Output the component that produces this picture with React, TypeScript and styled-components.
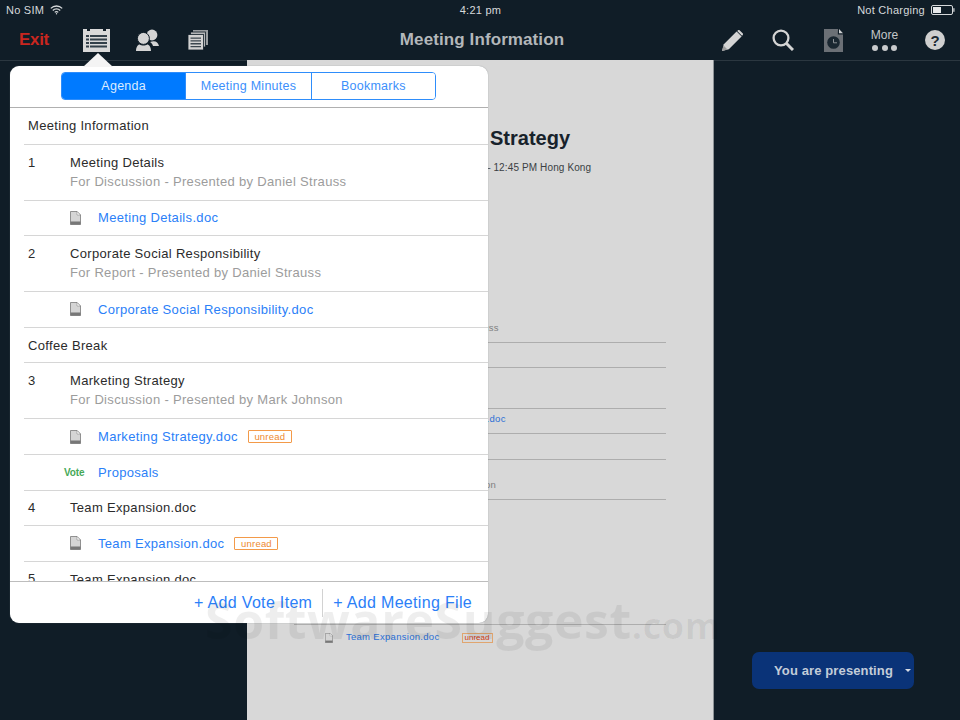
import React from "react";
import styled, { createGlobalStyle } from "styled-components";

const Global = createGlobalStyle`
  html, body { margin: 0; padding: 0; background: #101d27; }
  * { box-sizing: border-box; }
`;
const Root = styled.div`
  position: relative; width: 960px; height: 720px; overflow: hidden;
  background: #101d27; display: flex; flex-direction: column;
  font-family: "Liberation Sans", Arial, sans-serif;
`;
const StatusBar = styled.div`
  height: 20px; padding: 0 5px 0 6px; display: grid; grid-template-columns: 1fr auto 1fr; align-items: center;
  color: #d6d9db; font-size: 11px; letter-spacing: .25px;
`;
const StatusSide = styled.div<{ $end?: boolean }>`
  display: flex; align-items: center; gap: 6px; justify-content: ${p => (p.$end ? "flex-end" : "flex-start")};
`;
const Toolbar = styled.div`
  height: 40px; padding: 0 15px 0 19px; display: grid; grid-template-columns: 1fr auto 1fr; align-items: center;
`;
const ToolGroup = styled.div<{ $end?: boolean }>`
  display: flex; align-items: center; justify-content: ${p => (p.$end ? "flex-end" : "flex-start")};
`;
const Exit = styled.span`
  color: #c9261f; font-size: 17px; font-weight: 700; letter-spacing: -.3px; width: 29px; white-space: nowrap;
`;
const Title = styled.div`
  color: #b3b7ba; font-size: 17px; font-weight: 700; letter-spacing: .1px;
`;
const ToolIcon = styled.span<{ $ml: number }>`
  display: flex; margin-left: ${p => p.$ml}px;
`;
const More = styled.div`
  width: 27px; margin-left: 28px; display: flex; flex-direction: column; align-items: center; gap: 3px;
  color: #c4c6c8; font-size: 12px; line-height: 13px; margin-top: -1px;
`;
const Dots = styled.div`
  display: flex; gap: 3.5px;
`;
const Dot = styled.i`
  width: 6px; height: 6px; border-radius: 50%; background: #c8cacc; display: block;
`;
const HelpBadge = styled.div`
  width: 20px; height: 20px; margin-left: 27px; border-radius: 50%; background: #cfcfcf; color: #1c2831;
  display: flex; align-items: center; justify-content: center; font-size: 15px; font-weight: 700;
`;
const Main = styled.div`
  flex: 1; min-height: 0; border-top: 1px solid #2b3740; padding-left: 247px; display: flex;
`;
const DocPage = styled.div`
  width: 467px; margin-top: -1px; background: #d8d8d8; border-right: 1px solid #8d9296;
`;
const DocClip = styled.div`
  height: 614px; overflow: hidden; padding: 66px 47px 0;
`;
const DocTitle = styled.h1`
  margin: 0; text-align: center; font-size: 20px; line-height: 24px; font-weight: 700; color: #17222b; height: 24px;
`;
const DocDate = styled.div`
  margin-top: 12px; text-align: center; font-size: 10px; line-height: 12px; color: #3a3f44; letter-spacing: .12px;
`;
const DocSpacer = styled.div<{ $h: number }>`
  height: ${p => p.$h}px;
`;
const DocRow = styled.div<{ $h: number; $line?: boolean }>`
  height: ${p => p.$h}px; border-bottom: ${p => (p.$line ? "1px solid #adadad" : "none")};
  display: flex; align-items: flex-end; padding-bottom: 8px; font-size: 9.5px; line-height: 12px; color: #808080;
  white-space: nowrap; letter-spacing: .3px;
`;
const DocLink = styled.span<{ $ml?: number }>`
  color: #2a6fd6; margin-left: ${p => p.$ml ?? 0}px;
`;
const DocBadge = styled.span<{ $ml: number }>`
  margin-left: ${p => p.$ml}px; height: 10px; width: 31px; border: 1px solid #e0a56f; color: #cf3b12;
  font-size: 8px; line-height: 8px; text-align: center; letter-spacing: 0;
`;
const DocFile = styled.span`
  display: flex; margin-left: 31px; margin-right: 13px;
`;
const DocHeading = styled.div`
  margin-top: 24px; font-size: 11.5px; line-height: 14px; font-weight: 700; color: #1a1a1a; letter-spacing: .2px;
`;
const Popover = styled.div`
  position: absolute; left: 10px; top: 66px; width: 478px; height: 557px; background: #fff; border-radius: 9px;
  display: flex; flex-direction: column; box-shadow: 0 0 1px rgba(120,125,130,.9);
`;
const Arrow = styled.div`
  position: absolute; left: 73px; top: -13px; width: 30px; height: 14px; background: #f4f4f4;
  clip-path: polygon(50% 0, 100% 100%, 0 100%);
`;
const TabBar = styled.div`
  height: 42px; flex: none; padding: 6px 0 0 51px; border-bottom: 1px solid #b0b0b0;
`;
const Segment = styled.div`
  width: 375px; height: 28px; display: flex; border: 1px solid #2e8dfb; border-radius: 4px; overflow: hidden;
`;
const Tab = styled.div<{ $active?: boolean; $w: number }>`
  width: ${p => p.$w}px; display: flex; align-items: center; justify-content: center;
  font-size: 12.5px; letter-spacing: .25px;
  color: ${p => (p.$active ? "#dcecff" : "#3c8ffb")};
  background: ${p => (p.$active ? "#007aff" : "#fff")};
  & + & { border-left: 1px solid #2e8dfb; }
`;
const List = styled.div`
  flex: 1; min-height: 0; overflow: hidden; padding-left: 14px;
`;
const Row = styled.div<{ $h: number }>`
  height: ${p => p.$h}px; display: flex; align-items: center; padding-left: 4px;
  border-bottom: 1px solid #d6d6d6; font-size: 13px; letter-spacing: .32px; color: #2b2b2b; white-space: nowrap; flex-shrink: 0;
`;
const RowTop = styled(Row)`
  align-items: flex-start; padding-top: 10px;
`;
const Num = styled.span`
  width: 42px; flex: none; line-height: 16px;
`;
const Stack = styled.div`
  display: flex; flex-direction: column; gap: 3px; line-height: 16px;
`;
const Sub = styled.span`
  color: #9c9c9c;
`;
const FileSlot = styled.span`
  width: 70px; flex: none; padding-left: 42px; display: flex;
`;
const VoteSlot = styled.span`
  width: 70px; flex: none; padding-left: 36px; font-size: 10px; font-weight: 700; letter-spacing: -.1px; color: #46a958;
`;
const Link = styled.span`
  color: #2b80f8;
`;
const Badge = styled.span`
  margin-left: 10px; width: 44px; height: 13px; border: 1px solid #f39a49; border-radius: 1px; color: #ee8a30;
  font-size: 9.5px; line-height: 11px; text-align: center; letter-spacing: .2px;
`;
const Footer = styled.div`
  height: 42px; flex: none; border-top: 1px solid #bdbdbd; display: flex; align-items: center; justify-content: flex-end;
  padding-right: 16px; color: #2b80f8; font-size: 16px; letter-spacing: .32px;
`;
const Divider = styled.span`
  width: 1px; height: 28px; background: #d2d2d2; margin: 0 10px;
`;
const Watermark = styled.div`
  position: absolute; left: 205px; top: 590px; font-size: 50px; line-height: 60px; font-weight: 700;
  color: rgba(0,0,0,.065); white-space: nowrap; pointer-events: none; font-family: "Open Sans", sans-serif; letter-spacing: .6px;
`;
const Small = styled.span`
  font-size: 36px;
`;
const Presenting = styled.div`
  position: absolute; left: 752px; top: 652px; width: 162px; height: 37px; background: #0a3378; border-radius: 7px;
  display: flex; align-items: center; padding-left: 22px; color: #c3ccd9; font-size: 13px; font-weight: 700; letter-spacing: .12px;
`;
const Caret = styled.i`
  margin-left: 12px; width: 0; height: 0; border-left: 3.5px solid transparent; border-right: 3.5px solid transparent;
  border-top: 3.5px solid #d7dce4; display: block;
`;

const FileIcon = ({ s = 1 }: { s?: number }) => (
  <svg width={11 * s} height={14 * s} viewBox="0 0 11 14">
    <path d="M.5.5H7L10.5 4v9.5H.5z" fill="#d5d5d5" stroke="#7a7a7a" strokeWidth=".8" />
    <path d="M7 .5V4h3.5z" fill="#fff" stroke="#7a7a7a" strokeWidth=".5" />
    <rect x="0.5" y="10.5" width="10" height="3" fill="#777" />
  </svg>
);

const Wifi = () => (
  <svg width="13" height="10" viewBox="0 0 13 10" fill="none" stroke="#d6d9db" strokeWidth="1.3">
    <path d="M.8 3.4a8 8 0 0 1 11.4 0" />
    <path d="M2.8 5.5a5.2 5.2 0 0 1 7.4 0" />
    <path d="M4.8 7.4a2.4 2.4 0 0 1 3.4 0" />
    <circle cx="6.5" cy="8.8" r=".7" fill="#d6d9db" stroke="none" />
  </svg>
);
const Battery = () => (
  <svg width="24" height="10" viewBox="0 0 24 10">
    <rect x=".5" y=".5" width="21" height="9" rx="1.5" fill="none" stroke="#d6d9db" />
    <rect x="2" y="2" width="8" height="6" fill="#e6e8ea" />
    <rect x="22.3" y="3.2" width="1.2" height="3.6" fill="#d6d9db" />
  </svg>
);
const AgendaIcon = () => (
  <svg width="27" height="24" viewBox="0 0 27 24">
    <path d="M0 1h4v2h3V1h13v2h3V1h4v23H0z" fill="#d9d9d9" />
    <path d="M3 7h21v2H3zM3 10.5h21v2H3zM3 14h21v2H3zM3 17.5h21v2H3z" fill="#33404a" />
    <path d="M6 6.5h1v14H6z" fill="#d9d9d9" />
  </svg>
);
const PeopleIcon = () => (
  <svg width="23" height="22" viewBox="0 0 23 22" fill="#d4d4d4">
    <circle cx="16" cy="6" r="5.4" />
    <path d="M14 13c5-2 8 0 9 4h-6c-.4-1.6-1.5-3-3-4z" />
    <circle cx="7.4" cy="9.4" r="6" stroke="#101d27" strokeWidth="1" />
    <path d="M0 22c0-4 2-6.500 3.600-6.500 1.800 1.300 5.800 1.300 7.600 0C13 15.500 15 18 15 22z" />
  </svg>
);
const DocsIcon = () => (
  <svg width="20" height="20" viewBox="0 0 20 20">
    <rect x="5" y="0" width="15" height="15" fill="#9a9ea1" />
    <rect x="2.500" y="2" width="15" height="15" fill="#b5b7b9" stroke="#101d27" strokeWidth=".8" />
    <rect x="0" y="4.500" width="15.500" height="15.500" fill="#d2d2d2" stroke="#101d27" strokeWidth=".8" />
    <path d="M2.500 7.500h10.500v1.300H2.500zM2.500 10.300h10.500v1.300H2.500zM2.500 13.100h10.500v1.300H2.500zM2.500 15.900h10.500v1.300H2.500z" fill="#3b464e" />
  </svg>
);
const PencilIcon = () => (
  <svg width="21" height="21" viewBox="0 0 21 21" fill="#d4d4d4">
    <path d="M0 21l1.800-6.800L14.600 1.400l5 5L6.800 19.200z" />
    <path d="M15.800.4c.6-.6 1.400-.6 2 0l2.800 2.800c.6.600.6 1.400 0 2L20 5.800 15.200 1z" />
    <path d="M0 21l1.500-5.500 4 4z" fill="#9b9b9b" />
  </svg>
);
const SearchIcon = () => (
  <svg width="22" height="22" viewBox="0 0 22 22" fill="none" stroke="#d4d4d4">
    <circle cx="9" cy="9" r="7.400" strokeWidth="2.300" />
    <path d="M14.500 14.500L21 21" strokeWidth="3" />
  </svg>
);
const ClockDocIcon = () => (
  <svg width="19" height="23" viewBox="0 0 19 23">
    <path d="M0 0h14l-.2 5.500H19V23H0z" fill="#6b7076" />
    <path d="M15 0l4 4.200h-4z" fill="#cfd1d3" />
    <circle cx="9.500" cy="13.500" r="6.300" fill="#1a2731" />
    <path d="M9.500 10v3.800h3.500" fill="none" stroke="#8b9095" strokeWidth="1" />
  </svg>
);

const Row1 = ({ n, t, s }: { n: string; t: string; s: string }) => (
  <RowTop $h={56}>
    <Num>{n}</Num>
    <Stack><span>{t}</span><Sub>{s}</Sub></Stack>
  </RowTop>
);
const FileRow = ({ t, unread }: { t: string; unread?: boolean }) => (
  <Row $h={35.600}>
    <FileSlot><FileIcon /></FileSlot>
    <Link>{t}</Link>
    {unread && <Badge>unread</Badge>}
  </Row>
);

export default function App() {
  return (
    <Root>
      <Global />
      <StatusBar>
        <StatusSide>No SIM <Wifi /></StatusSide>
        <span>4:21 pm</span>
        <StatusSide $end>Not Charging <Battery /></StatusSide>
      </StatusBar>
      <Toolbar>
        <ToolGroup>
          <Exit>Exit</Exit>
          <ToolIcon $ml={35}><AgendaIcon /></ToolIcon>
          <ToolIcon $ml={26}><PeopleIcon /></ToolIcon>
          <ToolIcon $ml={29}><DocsIcon /></ToolIcon>
        </ToolGroup>
        <Title>Meeting Information</Title>
        <ToolGroup $end>
          <ToolIcon $ml={0}><PencilIcon /></ToolIcon>
          <ToolIcon $ml={29}><SearchIcon /></ToolIcon>
          <ToolIcon $ml={30}><ClockDocIcon /></ToolIcon>
          <More>More<Dots><Dot /><Dot /><Dot /></Dots></More>
          <HelpBadge>?</HelpBadge>
        </ToolGroup>
      </Toolbar>
      <Main>
        <DocPage>
          <DocClip>
            <DocTitle>Marketing Strategy</DocTitle>
            <DocDate>June 15, 2015, 11:45 AM – 12:45 PM Hong Kong</DocDate>
            <DocSpacer $h={115} />
            <DocRow $h={54} $line>For Discussion - Presented by Daniel Strauss</DocRow>
            <DocRow $h={25} $line />
            <DocRow $h={41} $line>For Report - Presented by Daniel Strauss</DocRow>
            <DocRow $h={25} $line><DocLink $ml={52}>Corporate Social Responsibility.doc</DocLink></DocRow>
            <DocRow $h={26} $line />
            <DocRow $h={40} $line>For Discussion - Presented by Mark Johnson</DocRow>
            <DocRow $h={125} $line />
            <DocRow $h={26}>
              <DocFile><FileIcon s={0.72} /></DocFile>
              <DocLink>Team Expansion.doc</DocLink>
              <DocBadge $ml={22}>unread</DocBadge>
            </DocRow>
            <DocHeading>Meeting Minutes</DocHeading>
          </DocClip>
        </DocPage>
      </Main>
      <Popover>
        <Arrow />
        <TabBar>
          <Segment>
            <Tab $active $w={124}>Agenda</Tab>
            <Tab $w={126}>Meeting Minutes</Tab>
            <Tab $w={125}>Bookmarks</Tab>
          </Segment>
        </TabBar>
        <List>
          <Row $h={36.600}>Meeting Information</Row>
          <Row1 n="1" t="Meeting Details" s="For Discussion - Presented by Daniel Strauss" />
          <FileRow t="Meeting Details.doc" />
          <Row1 n="2" t="Corporate Social Responsibility" s="For Report - Presented by Daniel Strauss" />
          <FileRow t="Corporate Social Responsibility.doc" />
          <Row $h={35.600}>Coffee Break</Row>
          <Row1 n="3" t="Marketing Strategy" s="For Discussion - Presented by Mark Johnson" />
          <FileRow t="Marketing Strategy.doc" unread />
          <Row $h={35.600}><VoteSlot>Vote</VoteSlot><Link>Proposals</Link></Row>
          <Row $h={35.600}><Num>4</Num>Team Expansion.doc</Row>
          <FileRow t="Team Expansion.doc" unread />
          <Row $h={35.600}><Num>5</Num>Team Expansion.doc</Row>
        </List>
        <Footer>
          <span>+ Add Vote Item</span>
          <Divider />
          <span>+ Add Meeting File</span>
        </Footer>
      </Popover>
      <Watermark>SoftwareSuggest<Small>.com</Small></Watermark>
      <Presenting>You are presenting<Caret /></Presenting>
    </Root>
  );
}
